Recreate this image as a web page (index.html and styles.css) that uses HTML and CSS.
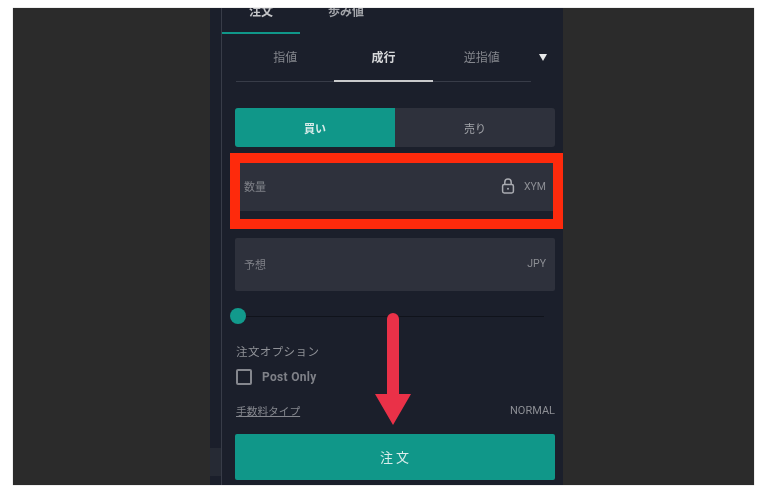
FILE: index.html
```html
<!DOCTYPE html>
<html lang="ja">
<head>
    <meta charset="UTF-8">
    <meta name="viewport" content="width=device-width, initial-scale=1.0">
    <title>注文</title>
    <link rel="stylesheet" href="styles.css">
</head>
<body>
    <div class="screen">
        <div class="panel">
            <div class="rail-mark"></div>
            <div class="column">
                <div class="main-tabs">
                    <div class="main-tab active">注文</div>
                    <div class="main-tab second">歩み値</div>
                </div>

                <div class="content">
                    <div class="type-row">
                        <div class="type-tabs">
                            <div class="type-tab">指値</div>
                            <div class="type-tab active">成行</div>
                            <div class="type-tab">逆指値</div>
                        </div>
                        <div class="type-more"></div>
                    </div>

                    <div class="side-switch">
                        <div class="side buy">買い</div>
                        <div class="side sell">売り</div>
                    </div>

                    <div class="field amount">
                        <span class="field-label">数量</span>
                        <svg class="lock" viewBox="0 0 14 16" width="14" height="16" fill="none" stroke="#a9abb1" stroke-width="1.5">
                            <path d="M3.8 6.5V4.2a3.2 3.2 0 0 1 6.4 0v2.3"/>
                            <rect x="1.6" y="6.5" width="10.8" height="8.4" rx="1.6"/>
                            <circle cx="7" cy="10.7" r="1" fill="#a9abb1" stroke="none"/>
                        </svg>
                        <span class="field-unit">XYM</span>
                    </div>

                    <div class="field estimate">
                        <span class="field-label">予想</span>
                        <span class="field-unit">JPY</span>
                    </div>

                    <div class="slider">
                        <div class="slider-knob"></div>
                        <div class="slider-line"></div>
                    </div>

                    <div class="options-title">注文オプション</div>
                    <div class="option">
                        <div class="checkbox"></div>
                        <span class="option-label">Post Only</span>
                    </div>

                    <div class="fee-row">
                        <span class="fee-label">手数料タイプ</span>
                        <span class="fee-value">NORMAL</span>
                    </div>

                    <div class="order-btn">注 文</div>
                </div>
            </div>

            <!-- annotations on top of the screenshot -->
            <div class="red-box"></div>
            <svg class="arrow" viewBox="0 0 36 113" width="36" height="113">
                <path d="M12 81V6a6 6 0 0 1 12 0v75h12L18 112 0 81z" fill="#ea3148"/>
            </svg>
        </div>
    </div>
</body>
</html>
```

FILE: styles.css
```css
body {
    margin: 0;
    width: 768px;
    height: 499px;
    padding: 8px 14px 14px 13px;
    box-sizing: border-box;
    background-color: white;
    font-family: "Roboto", "Noto Sans CJK JP", sans-serif;
    overflow: hidden;
}

.screen {
    height: 477px;
    background-color: #2b2b2b;
    box-shadow: 0 0 1px #999;
    overflow: hidden;
}

.panel {
    position: relative;
    width: 353px;
    height: 477px;
    margin-left: 197px;
    padding-left: 11px;
    box-sizing: border-box;
    background-color: #1b1f2b;
}

.rail-mark {
    position: absolute;
    left: 0;
    top: 440px;
    width: 11px;
    height: 28px;
    background-color: #262a34;
}

.column {
    height: 100%;
    border-left: 1px solid #383c48;
    filter: blur(0.5px);
}

.main-tabs {
    display: flex;
    height: 26px;
    align-items: flex-end;
    overflow: hidden;
}

.main-tab {
    width: 78px;
    height: 26px;
    box-sizing: border-box;
    text-align: center;
    font-size: 12px;
    font-weight: 700;
    line-height: 8px;
    color: #c4c5c8;
}

.main-tab.active {
    border-bottom: 2px solid #109789;
}

.main-tab.second {
    width: 92px;
    color: #a3a5aa;
}

.content {
    width: 320px;
    margin-left: 13px;
}

.type-row {
    display: flex;
    align-items: flex-start;
}

.type-tabs {
    display: flex;
    width: 295px;
    height: 48px;
    margin-left: 1px;
    box-sizing: border-box;
    border-bottom: 1px solid #383c48;
}

.type-tab {
    flex: 1;
    height: 48px;
    box-sizing: border-box;
    padding-top: 15px;
    text-align: center;
    font-size: 12px;
    line-height: 18px;
    color: #85878e;
}

.type-tab.active {
    border-bottom: 2px solid #c9cacc;
    font-weight: 700;
    color: #d6d7d9;
}

.type-more {
    width: 0;
    height: 0;
    margin: 20px 0 0 8px;
    border-left: 4px solid transparent;
    border-right: 4px solid transparent;
    border-top: 7px solid #e8e9ea;
}

.side-switch {
    display: flex;
    height: 39px;
    margin-top: 26px;
    border-radius: 3px;
    overflow: hidden;
    background-color: #2e313c;
}

.side {
    display: flex;
    flex: 1;
    justify-content: center;
    align-items: center;
    font-size: 11px;
}

.side.buy {
    background-color: #109789;
    font-weight: 700;
    color: #d9ecea;
}

.side.sell {
    color: #a3a5aa;
}

.field {
    display: flex;
    align-items: center;
    height: 53px;
    padding: 0 9px;
    border-radius: 2px;
    background-color: #2e313c;
}

.field-label {
    flex: 1;
    font-size: 11px;
    color: #7f8188;
}

.field-unit {
    font-size: 10.5px;
    color: #8c8e94;
}

.amount {
    height: 50px;
    margin-top: 11px;
    padding-top: 3px;
}

.lock {
    margin-right: 9px;
}

.estimate {
    margin-top: 27px;
    height: 51px;
    padding-bottom: 2px;
}

.slider {
    display: flex;
    align-items: center;
    height: 16px;
    margin-top: 17px;
}

.slider-knob {
    flex: none;
    width: 16px;
    height: 16px;
    margin-left: -5px;
    border-radius: 50%;
    background-color: #129a8c;
}

.slider-line {
    width: 298px;
    height: 1px;
    background-color: #10131b;
}

.options-title {
    margin: 19px 0 0 1px;
    font-size: 11.5px;
    line-height: 18px;
    letter-spacing: 0.4px;
    color: #8f9197;
}

.option {
    display: flex;
    align-items: center;
    height: 18px;
    margin: 7px 0 0 1px;
}

.checkbox {
    width: 16px;
    height: 16px;
    box-sizing: border-box;
    border: 2px solid #85878e;
    border-radius: 2px;
}

.option-label {
    margin-left: 10px;
    font-size: 12px;
    font-weight: 700;
    letter-spacing: 0.3px;
    color: #7f8188;
}

.fee-row {
    display: flex;
    justify-content: space-between;
    align-items: center;
    height: 18px;
    margin-top: 15px;
}

.fee-label {
    margin-left: 1px;
    font-size: 10.7px;
    color: #85878e;
    text-decoration: underline;
}

.fee-value {
    font-size: 11px;
    color: #8c8e94;
}

.order-btn {
    display: flex;
    justify-content: center;
    align-items: center;
    height: 46px;
    margin-top: 15px;
    padding-right: 1px;
    padding-bottom: 2px;
    box-sizing: border-box;
    border-radius: 2px;
    background-color: #109789;
    font-size: 13px;
    color: #d9ecea;
}

.red-box {
    position: absolute;
    left: 20px;
    top: 145px;
    width: 333px;
    height: 76px;
    box-sizing: border-box;
    border: 10px solid #fe2a0c;
}

.arrow {
    position: absolute;
    left: 165px;
    top: 305px;
}
```
